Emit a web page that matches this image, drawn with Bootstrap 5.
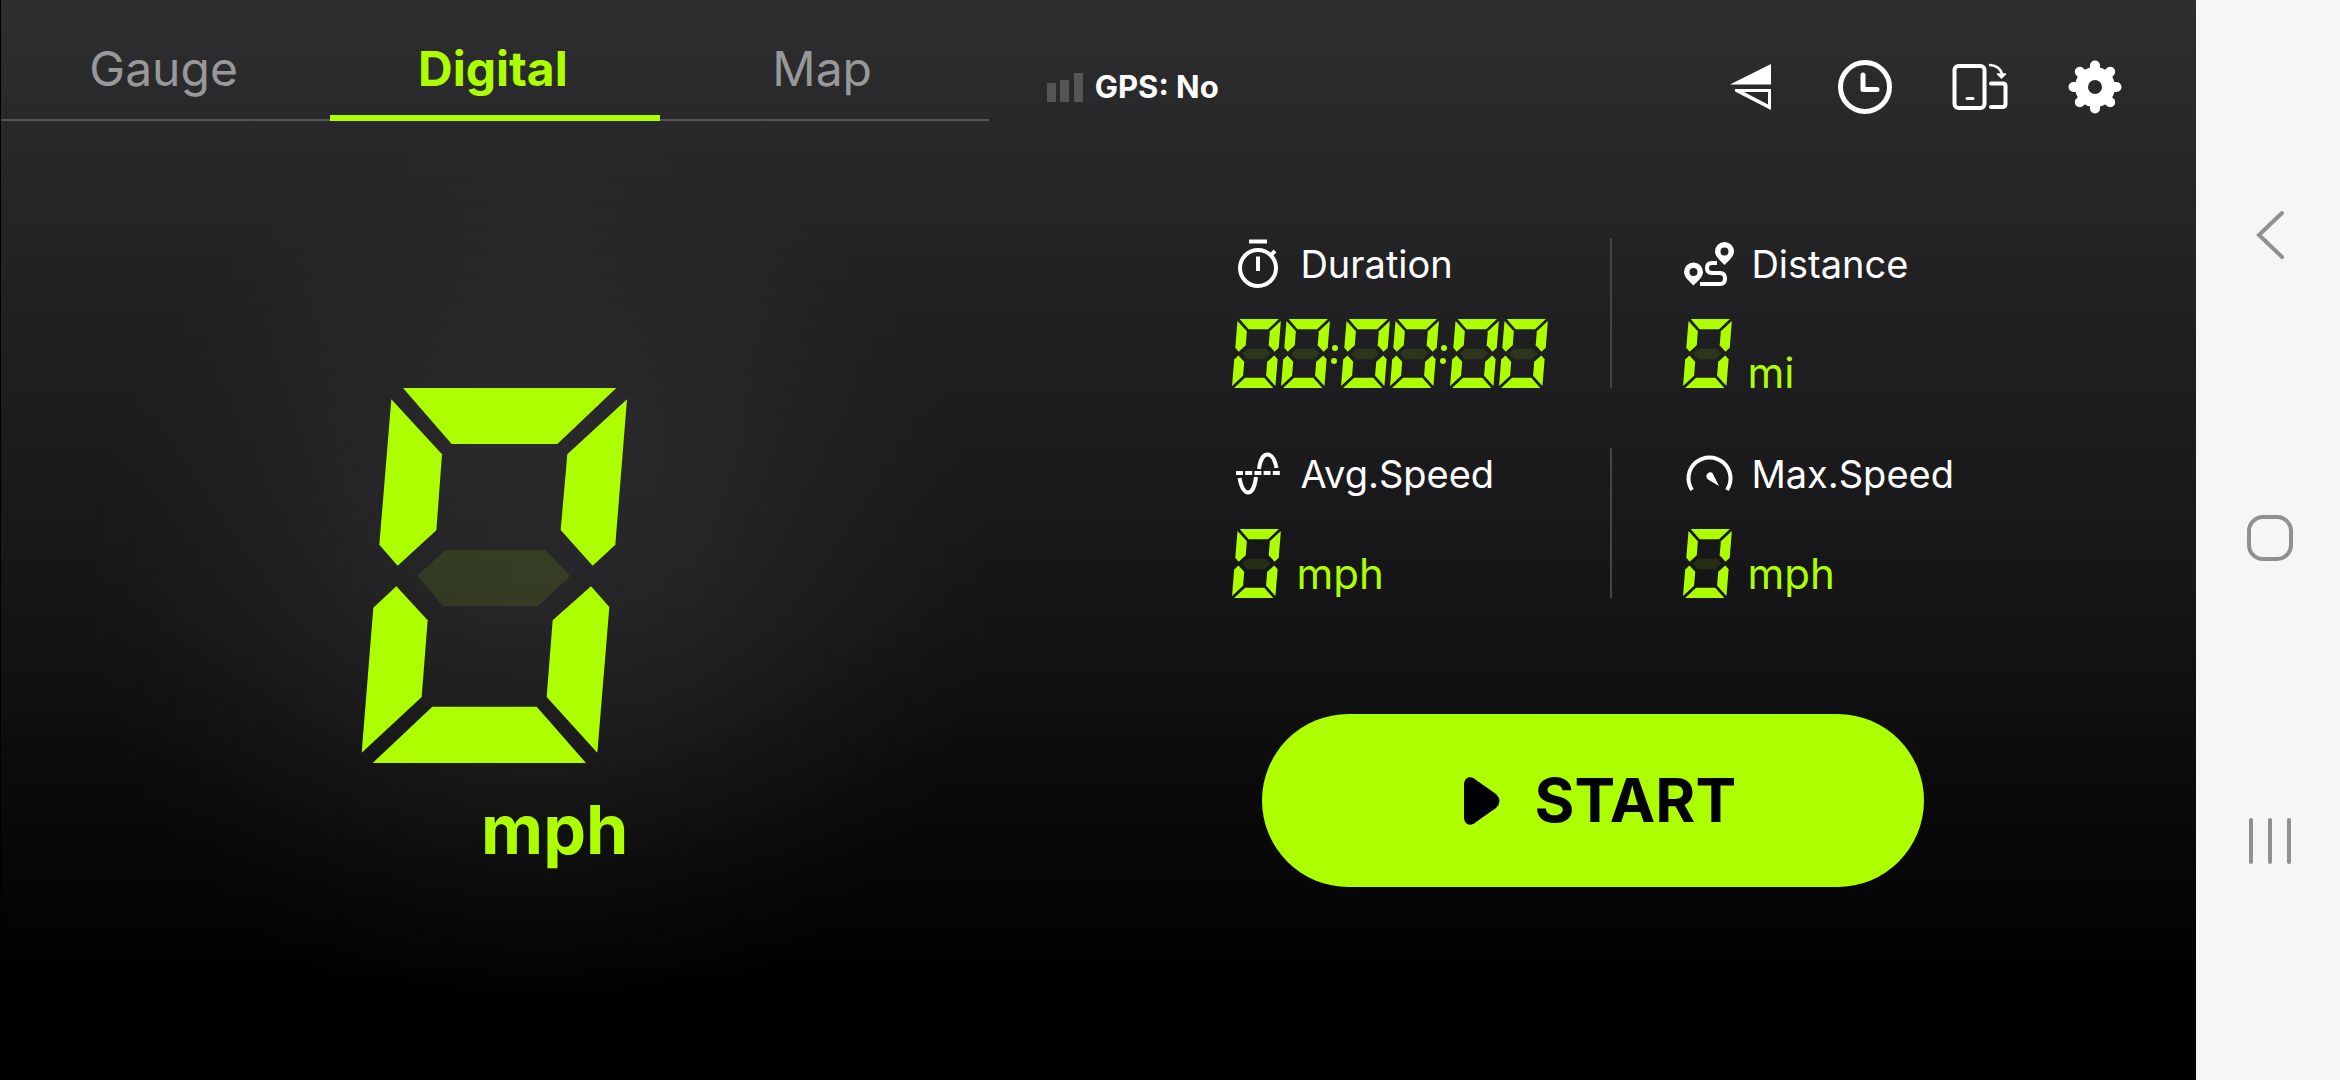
<!DOCTYPE html>
<html lang="en">
<head>
<meta charset="utf-8">
<meta name="viewport" content="width=device-width, initial-scale=1">
<title>Speedometer</title>
<link href="https://cdn.jsdelivr.net/npm/bootstrap@5.3.0/dist/css/bootstrap.min.css" rel="stylesheet">
<style>
  :root { --lime: #adff00; }
  body { font-family: Inter, "Open Sans", sans-serif; background: #000; color: #fff; }
  .app-screen {
    border-left: 1px solid #000;
    background:
      radial-gradient(circle 460px at 24.5% 54%, rgba(255,255,255,.075), rgba(255,255,255,.06) 35%, rgba(255,255,255,.028) 65%, rgba(255,255,255,.009) 87%, rgba(255,255,255,0)),
      linear-gradient(#2e2e30 0%, #232325 23%, #141416 58%, #050505 82%, #000 92%);
  }
  .top-bar { height: 174px; }
  .left-part { width: 45%; }
  .mode-tabs { height: 121px; border-bottom: 2px solid #555557; }
  .mode-tabs .nav-item { height: 121px; }
  .mode-tabs .nav-link { height: 121px; padding: 39px 4px 0 0; font-size: 48px; line-height: 60px; color: #98989a; border-radius: 0; border-bottom: 6px solid transparent; }
  .mode-tabs .nav-link.active { color: var(--lime); font-weight: 700; border-bottom-color: var(--lime); }
  .gps { margin-left: 58px; gap: 12px; font-size: 31px; line-height: 40px; font-weight: 700; }
  .tools { gap: 59px; padding-right: 73px; }
  .tools svg { width: 56px; height: 56px; }
  .readout { padding-top: 214px; }
  .speed-box { width: 267px; }
  .led-big { width: 267px; height: 375px; }
  .speed-unit { font-size: 68px; line-height: 80px; margin-top: 26px; font-weight: 700; color: var(--lime); }
  .details { padding: 64px 0 0 2px; }
  .stats { width: 722px; gap: 60px; margin-bottom: 116px; }
  .stat { height: 150px; }
  .stat-first { width: 380px; border-right: 2px solid #454547; }
  .stat-second { padding-left: 71px; }
  .stat-title { height: 52px; gap: 16px; margin-bottom: 29px; font-size: 38px; }
  .stat-title svg { width: 52px; height: 52px; }
  .led { width: 49px; height: 69px; flex: none; }
  .led-colon { width: 11px; height: 69px; flex: none; }
  .unit { font-size: 42px; line-height: 48px; margin-left: 15px; color: var(--lime); }
  .start-btn { --bs-btn-bg: var(--lime); --bs-btn-hover-bg: #9be600; --bs-btn-active-bg: #8ccf00; --bs-btn-color: #000; width: 662px; height: 173px; gap: 34px; padding-left: 24px; font-size: 61px; font-weight: 700; }
  .start-btn svg { width: 38px; height: 48px; }
  .sys-nav { width: 144px; background: #f6f6f8; padding: 84px 0 88px 4px; }
  .sys-nav svg { width: 50px; height: 50px; fill: none; stroke: #909092; stroke-width: 4; stroke-linecap: round; }
</style>
</head>
<body>
<svg class="d-none" xmlns="http://www.w3.org/2000/svg">
  <!-- seven-segment cell with the middle bar unlit -->
  <symbol id="cell" viewBox="63 51 797 1125">
    <g fill="#adff00">
      <polygon points="187,51 827,51 650,219 333,219"/>
      <polygon points="152,85 304,250 287,478 171,584 116,521"/>
      <polygon points="859,85 824,521 756,584 660,477 680,250"/>
      <polygon points="167,646 261,748 243,978 63,1145 98,710"/>
      <polygon points="751,646 806,708 770,1145 618,978 636,748"/>
      <polygon points="275,1007 588,1007 736,1176 96,1176"/>
    </g>
    <polygon fill="#adff00" fill-opacity=".1" points="230,615 313,537 615,537 689,615 592,706 307,706"/>
  </symbol>
  <symbol id="dots" viewBox="0 0 11 69">
    <circle cx="5" cy="29" r="3" fill="#adff00"/><circle cx="4" cy="42" r="3" fill="#adff00"/>
  </symbol>
</svg>

<div class="d-flex min-vh-100">
  <div class="app-screen flex-grow-1">
    <header class="top-bar d-flex">
      <ul class="nav nav-fill mode-tabs left-part">
        <li class="nav-item col-4"><a class="nav-link" href="#gauge">Gauge</a></li>
        <li class="nav-item col-4"><a class="nav-link active" aria-current="page" href="#digital">Digital</a></li>
        <li class="nav-item col-4"><a class="nav-link" href="#map">Map</a></li>
      </ul>
      <div class="gps d-flex align-items-center">
        <svg width="36" height="30" viewBox="0 0 36 30" fill="#555557" aria-hidden="true"><path d="M0 11h9v19H0zM13 8h9v22h-9zM27 1h9v29h-9z"/></svg>
        <span>GPS: No</span>
      </div>
      <div class="tools d-flex align-items-center ms-auto">
        <button type="button" class="btn p-0 border-0 lh-1" aria-label="Mirror display">
          <svg viewBox="0 0 56 56"><path fill="#fff" d="M49 5v20.500H8z"/><path fill="#fff" fill-rule="evenodd" d="M13 30h36v21L13 32.500zM22 33l24 12.500V33z"/></svg>
        </button>
        <button type="button" class="btn p-0 border-0 lh-1" aria-label="History">
          <svg viewBox="0 0 56 56" fill="none" stroke="#fff" stroke-width="5" stroke-linecap="round"><circle cx="28" cy="28" r="24.500"/><path d="M26 16v14.500h14" stroke-linejoin="round"/></svg>
        </button>
        <button type="button" class="btn p-0 border-0 lh-1" aria-label="Rotate screen">
          <svg viewBox="0 0 56 56" fill="none" stroke="#fff" stroke-width="4" stroke-linecap="round"><rect x="2.500" y="7" width="30" height="42" rx="4"/><path d="M15 39.500h6" stroke-width="3"/><path d="M39 24.500h12q2.500 0 2.500 2.500v18q0 3-3 3H39"/><path d="M38 6q10 1 12 9" stroke-width="2.500"/><path d="M45.500 15h8L49.500 19z" fill="#fff" stroke-width="1.500" stroke-linejoin="round"/></svg>
        </button>
        <button type="button" class="btn p-0 border-0 lh-1" aria-label="Settings">
          <svg viewBox="0 0 56 56" fill="none" stroke="#fff"><circle cx="28" cy="28" r="13.500" stroke-width="13"/><path stroke-width="10" stroke-linecap="round" d="M28 6.500v6M28 43.500v6M6.500 28h6M43.500 28h6M12.800 12.800l5 5M38.200 38.200l5 5M43.200 12.800l-5 5M12.800 43.200l5-5"/></svg>
        </button>
      </div>
    </header>

    <main class="d-flex">
      <section class="readout left-part d-flex flex-column align-items-center">
        <div class="speed-box d-flex flex-column align-items-end">
          <svg class="led-big" role="img" aria-label="0"><use href="#cell"/></svg>
          <div class="speed-unit">mph</div>
        </div>
      </section>

      <section class="details flex-grow-1 d-flex flex-column align-items-center">
        <div class="stats d-flex flex-column">
          <div class="d-flex">
            <div class="stat stat-first">
              <div class="stat-title d-flex align-items-center">
                <svg viewBox="0 0 52 52" fill="none" stroke="#fff" stroke-width="4"><path d="M17 3.500h18"/><circle cx="26" cy="30" r="18"/><path d="M26 18.500V33M38 18l5-5"/></svg>
                <span>Duration</span>
              </div>
              <div class="d-flex" role="img" aria-label="00:00:00">
                <svg class="led"><use href="#cell"/></svg><svg class="led"><use href="#cell"/></svg><svg class="led-colon"><use href="#dots"/></svg><svg class="led"><use href="#cell"/></svg><svg class="led"><use href="#cell"/></svg><svg class="led-colon"><use href="#dots"/></svg><svg class="led"><use href="#cell"/></svg><svg class="led"><use href="#cell"/></svg>
              </div>
            </div>
            <div class="stat stat-second">
              <div class="stat-title d-flex align-items-center">
                <svg viewBox="0 0 52 52"><path fill="#fff" fill-rule="evenodd" d="M10.500 24.500a9.500 9.500 0 0 1 9.500 9.500c0 5-5 9-9.500 13.500C6 43 1 39 1 34a9.500 9.500 0 0 1 9.500-9.500zm0 5.500a4 4 0 1 0 0 8 4 4 0 0 0 0-8zM41.500 4a9.500 9.500 0 0 1 9.500 9.500c0 5-5 9-9.500 13.500-4.500-4.500-9.500-8.500-9.500-13.500A9.500 9.500 0 0 1 41.500 4zm0 5.500a4 4 0 1 0 0 8 4 4 0 0 0 0-8z"/><path fill="none" stroke="#fff" stroke-width="4" d="M34 25h-5q-5 0-5 5t5 5h8q5 0 5 5.500t-5 5.500H17"/></svg>
                <span>Distance</span>
              </div>
              <div class="d-flex align-items-baseline">
                <svg class="led" role="img" aria-label="0"><use href="#cell"/></svg><span class="unit">mi</span>
              </div>
            </div>
          </div>
          <div class="d-flex">
            <div class="stat stat-first">
              <div class="stat-title d-flex align-items-center">
                <svg viewBox="0 0 52 52" fill="none" stroke="#fff" stroke-width="4"><path d="M4 25h44" stroke-dasharray="7 2.200"/><path d="M7.500 30C9 38 12 44.500 16 44.500S23 38 24 29M27 21C28 13 31 6.500 35.500 6.500S43 12 44.500 20"/></svg>
                <span>Avg.Speed</span>
              </div>
              <div class="d-flex align-items-end">
                <svg class="led" role="img" aria-label="0"><use href="#cell"/></svg><span class="unit">mph</span>
              </div>
            </div>
            <div class="stat stat-second">
              <div class="stat-title d-flex align-items-center">
                <svg viewBox="0 0 52 52"><path fill="none" stroke="#fff" stroke-width="4" d="M9 42a21 21 0 1 1 35 0"/><path fill="#fff" d="M23.500 29.500a4 4 0 0 1 6-4.500L36 38l-11-6.500z"/></svg>
                <span>Max.Speed</span>
              </div>
              <div class="d-flex align-items-end">
                <svg class="led" role="img" aria-label="0"><use href="#cell"/></svg><span class="unit">mph</span>
              </div>
            </div>
          </div>
        </div>
        <button type="button" class="btn start-btn rounded-pill border-0 d-flex align-items-center justify-content-center">
          <svg viewBox="0 0 38 48" aria-hidden="true"><path d="M1 8C1 0 8-2 13 3l20 14q7 7 0 14L13 45C8 50 1 48 1 40z"/></svg>
          <span>START</span>
        </button>
      </section>
    </main>
  </div>

  <nav class="sys-nav d-flex flex-column flex-shrink-0 justify-content-around align-items-center" aria-label="System">
    <button type="button" class="btn p-0 border-0 lh-1" aria-label="Back"><svg viewBox="0 0 50 50"><path d="M37 3L14 25l23 22"/></svg></button>
    <button type="button" class="btn p-0 border-0 lh-1" aria-label="Home"><svg viewBox="0 0 50 50"><rect x="4" y="4" width="42" height="42" rx="14"/></svg></button>
    <button type="button" class="btn p-0 border-0 lh-1" aria-label="Recent apps"><svg viewBox="0 0 50 50"><path d="M6 4v42M25 4v42M44 4v42"/></svg></button>
  </nav>
</div>
<script src="https://cdn.jsdelivr.net/npm/bootstrap@5.3.0/dist/js/bootstrap.bundle.min.js"></script>
</body>
</html>
